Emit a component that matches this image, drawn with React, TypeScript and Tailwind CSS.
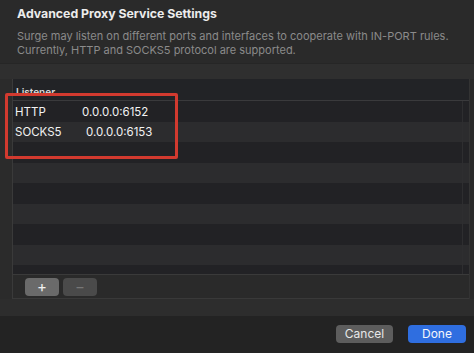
import React from "react";

const listeners = [
  { name: "HTTP", addr: "0.0.0.0:6152", pad: "pl-[67px]" },
  { name: "SOCKS5", addr: "0.0.0.0:6153", pad: "pl-[71px]" },
];

const App: React.FC = () => {
  const rows = Array.from({ length: 8 }, (_, i) => i);

  return (
    <div
      className="relative w-[474px] h-[353px] overflow-hidden bg-[#2a2a2a] flex flex-col"
      style={{ fontFamily: "Inter, 'Noto Sans', sans-serif" }}
    >
      {/* Header */}
      <div className="h-[63px] shrink-0 px-[17px] pt-[5px]">
        <h1 className="text-[12.3px] leading-[18px] font-bold text-[#ececec]">
          Advanced Proxy Service Settings
        </h1>
        <p className="mt-[6px] text-[11px] leading-[14px] text-[#8b8b8b]">
          Surge may listen on different ports and interfaces to cooperate with IN-PORT rules.
          <br />
          Currently, HTTP and SOCKS5 protocol are supported.
        </p>
      </div>

      <div className="h-[16px] shrink-0 bg-[#2f2f2f] border-t border-[#262626]" />

      {/* Table + controls */}
      <div className="flex h-[220px] shrink-0">
        <div className="w-[12px] bg-[#2b2b2b]" />
        <div className="w-[458px] flex flex-col border-l border-[#3a3a3a] border-r border-r-[#333333]">
          <div className="h-[22px] shrink-0 bg-[#222326] border-b border-[#3a3a3c] flex items-end px-[3px]">
            <span className="text-[10px] font-semibold text-[#d8d8d8] leading-[13px] translate-y-[-1px]">
              Listener
            </span>
          </div>
          {rows.map((i) => {
            const item = listeners[i];
            return (
              <div
                key={i}
                className={`h-[20.5px] shrink-0 flex ${i % 2 === 0 ? "bg-[#222225]" : "bg-[#2c2c2e]"}`}
              >
                <div className="flex-1 flex items-center px-[2px] pt-[2px] text-[11.5px] text-[#f2f2f2]">
                  {item && (
                    <>
                      <span className="w-[0px] whitespace-nowrap">{item.name}</span>
                      <span className={item.pad}>{item.addr}</span>
                    </>
                  )}
                </div>
                <div className="w-[7px] border-l border-[#2e2e30]" />
              </div>
            );
          })}
          <div className="h-[9px] shrink-0 bg-[#222225] flex">
            <div className="flex-1" />
            <div className="w-[7px] border-l border-[#2e2e30]" />
          </div>
          <div className="flex-1 bg-[#2a2a2a] border-t border-[#3a3a3a] border-b border-b-[#393939] flex items-center gap-[4px] pl-[12px]">
            <button className="w-[34px] h-[18px] rounded-[4px] bg-[#6a6a6a] text-[#f0f0f0] text-[15px] leading-none flex items-center justify-center">
              +
            </button>
            <button className="w-[34px] h-[18px] rounded-[4px] bg-[#4a4a4a] text-[#777777] text-[15px] leading-none flex items-center justify-center">
              −
            </button>
          </div>
        </div>
      </div>

      <div className="h-[17px] shrink-0 bg-[#2d2d2d]" />

      {/* Footer */}
      <div className="flex-1 bg-[#232323] flex justify-end items-start pt-[9px] pr-[8px] gap-[15px]">
        <button className="w-[57px] h-[18px] rounded-[4px] bg-[#5d5d5d] text-[#e8e8e8] text-[12px] leading-none">
          Cancel
        </button>
        <button className="w-[58px] h-[18px] rounded-[4px] bg-[#2f6ee0] text-[#f4f6fb] text-[12px] leading-none">
          Done
        </button>
      </div>

      {/* Red annotation box */}
      <div className="absolute left-[5px] top-[93px] w-[173px] h-[66px] border-[3px] border-[#d23a2f] rounded-[2px]" />
    </div>
  );
};

export default App;
